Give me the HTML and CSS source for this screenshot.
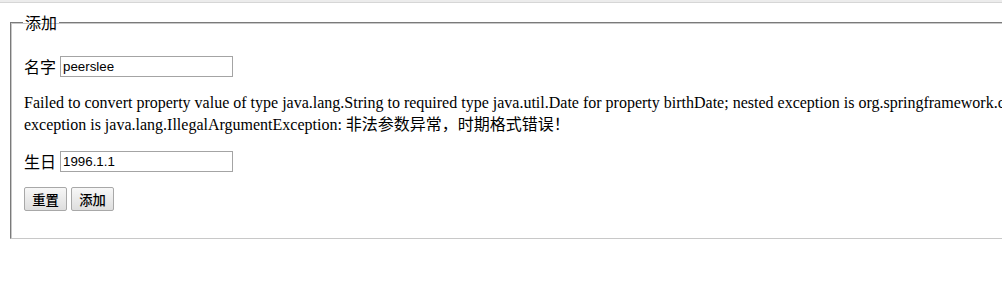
FILE: index.html
```html
<!DOCTYPE html>
<html>
<head>
<meta charset="utf-8">
<title>添加</title>
<link rel="stylesheet" href="styles.css">
</head>
<body>
<fieldset class="box">
  <legend class="box-title">添加</legend>
  <form class="form">
    <div class="row row-first">
      <label class="label">名字</label>
      <input class="field" type="text" value="peerslee">
    </div>
    <div class="error">Failed to convert property value of type java.lang.String to required type java.util.Date for property birthDate; nested exception is org.springframework.core.convert.ConversionFailedException: Failed to convert from type java.lang.String to type java.util.Date for value '1996.1.1'; nested<br>exception is java.lang.IllegalArgumentException: 非法参数异常，时期格式错误！</div>
    <div class="row">
      <label class="label">生日</label>
      <input class="field" type="text" value="1996.1.1">
    </div>
    <div class="actions">
      <button class="btn" type="reset">重置</button>
      <button class="btn" type="button">添加</button>
    </div>
  </form>
</fieldset>
</body>
</html>
```

FILE: styles.css
```css
html {
  border-top: 2px solid #ececec;
  box-shadow: inset 0 1px 0 #d6d6d6;
  overflow: hidden;
  background: #fff;
}
body {
  margin: 8px;
  font-family: "Liberation Serif", "Noto Sans CJK SC", serif;
  font-size: 16px;
  color: #000;
  width: 2000px;
}
.box {
  margin: 0 2px;
  padding: 0 12px 10px 13px;
  border-color: #7a7a7a #c8c8c8 #c8c8c8 #7a7a7a;
  border-style: solid;
  border-width: 1px;
  box-shadow: inset 1px 1px 0 #c8c8c8, 1px 1px 0 #7a7a7a;
}
.box-title {
  padding: 0 2px;
  margin-left: -1px;
  font-family: "Noto Sans CJK SC", sans-serif;
  font-size: 16px;
}
.form {
  display: flex;
  flex-direction: column;
  align-items: flex-start;
}
.row {
  display: flex;
  align-items: center;
  gap: 4px;
  margin-top: 13px;
}
.row-first {
  margin-top: 20px;
}
.label {
  font-family: "Noto Sans CJK SC", sans-serif;
  font-size: 16px;
}
.field {
  width: 173px;
  height: 21px;
  box-sizing: border-box;
  border: 1px solid #a4a4a4;
  padding: 1px 2px;
  font-family: "Liberation Sans", "Noto Sans CJK SC", sans-serif;
  font-size: 13.33px;
  color: #000;
  margin: 0;
}
.error {
  margin-top: 14px;
  line-height: 22px;
}
.actions {
  display: flex;
  gap: 4px;
  margin-top: 14px;
  margin-bottom: 17px;
}
.btn {
  width: 43px;
  height: 24px;
  margin: 0;
  padding: 0;
  border: 1px solid #a8a8a8;
  border-radius: 2px;
  background: linear-gradient(#f7f7f7, #dedede);
  font-family: "Noto Sans CJK SC", sans-serif;
  font-size: 13.33px;
  font-weight: 500;
  color: #000;
}
```
